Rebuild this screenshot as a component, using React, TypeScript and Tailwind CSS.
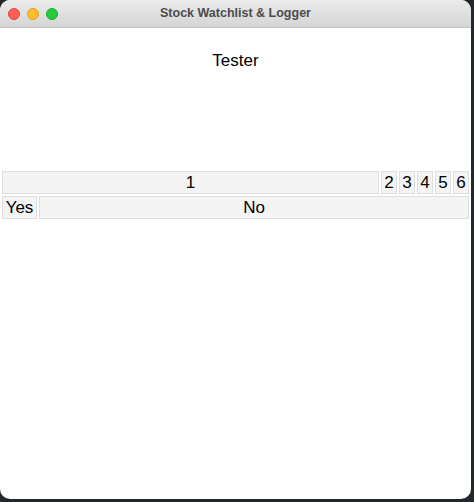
import React from 'react';

const Cell = ({ children, className = '' }: { children: React.ReactNode; className?: string }) => (
  <div className={`flex items-center justify-center h-[23px] bg-[#f4f4f4] border border-[#dedede] text-[17px] leading-none text-black ${className}`}>
    {children}
  </div>
);

export default function App() {
  return (
    <div className="w-[474px] h-[502px] bg-[#23262b] font-['Liberation_Sans',Arial,sans-serif]">
      <div className="w-[471px] h-[499px] bg-white rounded-[10px] overflow-hidden flex flex-col">
        {/* Title bar */}
        <div className="relative h-[28px] flex items-center justify-center bg-gradient-to-b from-[#ebebeb] to-[#d5d5d5] border-b border-[#c4c4c4]">
          <div className="absolute left-[8px] top-[8px] flex gap-[7px]">
            <span className="w-[12px] h-[12px] rounded-full bg-[#fe5f57] border border-[#e2463f]" />
            <span className="w-[12px] h-[12px] rounded-full bg-[#febc2e] border border-[#e1a116]" />
            <span className="w-[12px] h-[12px] rounded-full bg-[#28c840] border border-[#14ae2a]" />
          </div>
          <span className="text-[12.5px] font-bold text-[#4c4c4c]">Stock Watchlist &amp; Logger</span>
        </div>

        {/* Content */}
        <div className="flex flex-col pt-[23px] px-[2px]">
          <div className="text-center text-[17px] leading-[20px] text-black">Tester</div>

          <div className="mt-[100px] flex gap-[2px]">
            <Cell className="flex-1">1</Cell>
            <Cell className="w-[16px]">2</Cell>
            <Cell className="w-[16px]">3</Cell>
            <Cell className="w-[16px]">4</Cell>
            <Cell className="w-[16px]">5</Cell>
            <Cell className="w-[16px]">6</Cell>
          </div>

          <div className="mt-[2px] flex gap-[2px]">
            <Cell className="w-[35px]">Yes</Cell>
            <Cell className="flex-1">No</Cell>
          </div>
        </div>
      </div>
    </div>
  );
}
